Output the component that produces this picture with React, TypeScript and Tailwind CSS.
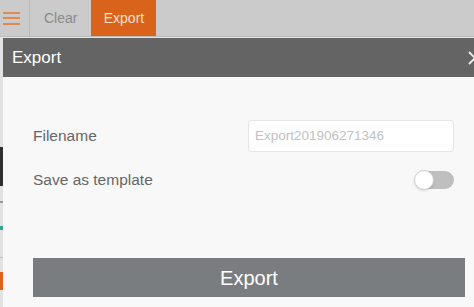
import { X } from 'lucide-react';

function Toolbar() {
  return (
    <div className="flex h-[37px] items-stretch bg-[#cbcbcb] border-b border-[#bdbdbd]">
      <div className="flex w-[30px] items-center justify-center border-r border-[#b8b8b8]">
        <div className="flex flex-col gap-[3.5px] pr-[7px]">
          <div className="h-[2px] w-[17px] bg-[#e08a4e]" />
          <div className="h-[2px] w-[17px] bg-[#e08a4e]" />
          <div className="h-[2px] w-[17px] bg-[#e08a4e]" />
        </div>
      </div>
      <div className="flex items-center px-[14px] text-[14px] text-[#8a8a8a]">Clear</div>
      <div className="flex w-[65px] items-center justify-center bg-[#d9631b] text-[14px] text-[#f8e0cf]">
        Export
      </div>
    </div>
  );
}

function BackgroundStrip() {
  return (
    <div className="flex flex-col w-[3px] h-full bg-[#e2e2e2]">
      <div className="h-[110px]" />
      <div className="h-[39px] bg-[#2f2f2f]" />
      <div className="h-[15px]" />
      <div className="h-[2px] bg-[#9a9a9a]" />
      <div className="h-[23px]" />
      <div className="h-[4px] bg-[#3aa58e]" />
      <div className="h-[27px]" />
      <div className="h-[1px] bg-[#bdbdbd]" />
      <div className="h-[14px]" />
      <div className="h-[18px] bg-[#d9631b]" />
    </div>
  );
}

function Toggle() {
  return (
    <div className="relative h-[20px] w-[40px]">
      <div className="absolute left-[4px] top-[1px] h-[18px] w-[36px] rounded-full bg-[#bfbfbf]" />
      <div className="absolute left-0 top-0 h-[20px] w-[20px] rounded-full bg-white border border-[#cfcfcf] shadow-sm" />
    </div>
  );
}

function ExportDialog() {
  return (
    <div className="absolute left-[3px] top-[38px] w-[490px] h-[280px] flex flex-col bg-[#f8f8f8]">
      <div className="flex h-[39px] items-center justify-between bg-[#646464] pl-[9px] pr-[7px]">
        <span className="text-[17px] text-white">Export</span>
        <X size={22} strokeWidth={2} className="text-[#ededed]" />
      </div>
      <div className="flex flex-col pl-[30px] pt-[43px]">
        <div className="flex items-center justify-between w-[421px]">
          <span className="text-[15.5px] text-[#666666]">Filename</span>
          <div className="flex h-[32px] w-[206px] items-center rounded-[3px] border border-[#e6e6e6] bg-white px-[6px] text-[13.5px] text-[#c2c2c2]">
            Export201906271346
          </div>
        </div>
        <div className="mt-[16px] flex items-center justify-between w-[421px]">
          <span className="text-[15.5px] text-[#666666]">Save as template</span>
          <Toggle />
        </div>
        <button className="mt-[67px] h-[39px] w-[432px] bg-[#7a7d80] text-[20px] text-white">
          Export
        </button>
      </div>
    </div>
  );
}

export default function App() {
  return (
    <div className="relative w-[474px] h-[307px] overflow-hidden bg-[#e2e2e2] font-['Liberation_Sans',Arial,sans-serif]">
      <Toolbar />
      <div className="h-[270px]">
        <BackgroundStrip />
      </div>
      <ExportDialog />
    </div>
  );
}
